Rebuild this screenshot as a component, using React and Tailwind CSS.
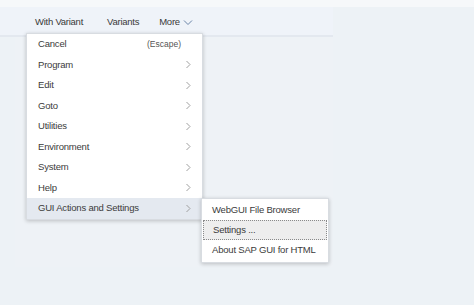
import React from "react";

const Chevron = () => (
  <svg width="7" height="9" viewBox="0 0 7 9" className="text-[#a0a0a0]">
    <path d="M1.5 1 L5 4.5 L1.5 8" fill="none" stroke="currentColor" strokeWidth="1" />
  </svg>
);

const items = ["Program", "Edit", "Goto", "Utilities", "Environment", "System", "Help"];

export default function App() {
  return (
    <div
      className="relative w-[474px] h-[305px] overflow-hidden bg-[#edf2f6] text-[#333]"
      style={{ fontFamily: "'Liberation Sans', Arial, sans-serif" }}
    >
      <div className="h-[7px] bg-[#f6f8fa]" />
      <div className="flex">
        <div className="w-[333px]">
          <div className="h-[30px] bg-[#eff3f9] border-b-2 border-[#e3e8ef] flex items-center pl-[35px] text-[9.5px] tracking-[-0.25px] text-[#3a3a3a] pt-[3px]">
            <span>With Variant</span>
            <span className="ml-[24px]">Variants</span>
            <span className="ml-[20px] flex items-center gap-[3px]">
              More
              <svg width="10" height="7" viewBox="0 0 10 7">
                <path d="M1 1.5 L5 5.5 L9 1.5" fill="none" stroke="#6a84a8" strokeWidth="1" />
              </svg>
            </span>
          </div>
          <div className="ml-[15px] h-[230px] bg-[#eef2f6]" />
        </div>
      </div>

      <div className="absolute left-[26px] top-[33px] w-[177px] bg-white border border-[#d8dce1] shadow-[0_1px_4px_rgba(0,0,0,0.22)] text-[9.5px] tracking-[-0.2px] text-[#3b3b3b]">
        <div className="h-[20.5px] flex items-center justify-between pl-[11px] pr-[21px]">
          <span>Cancel</span>
          <span className="text-[8.5px] tracking-normal text-[#555]">(Escape)</span>
        </div>
        {items.map((t) => (
          <div key={t} className="h-[20.5px] flex items-center justify-between pl-[11px] pr-[10px]">
            <span>{t}</span>
            <Chevron />
          </div>
        ))}
        <div className="h-[20.5px] flex items-center justify-between pl-[11px] pr-[10px] bg-[#e4e9f0]">
          <span>GUI Actions and Settings</span>
          <Chevron />
        </div>
      </div>

      <div className="absolute left-[201px] top-[198px] w-[128px] bg-white border border-[#d8dce1] shadow-[0_1px_4px_rgba(0,0,0,0.22)] text-[9.5px] tracking-[-0.2px] text-[#3b3b3b] py-[1px] whitespace-nowrap">
        <div className="h-[20px] flex items-center pl-[10px]">WebGUI File Browser</div>
        <div className="h-[20px] flex items-center pl-[9px] mx-[1px] bg-[#eeeeee] border border-dotted border-[#8a8a8a]">Settings ...</div>
        <div className="h-[21px] flex items-center pl-[10px]">About SAP GUI for HTML</div>
      </div>
    </div>
  );
}
